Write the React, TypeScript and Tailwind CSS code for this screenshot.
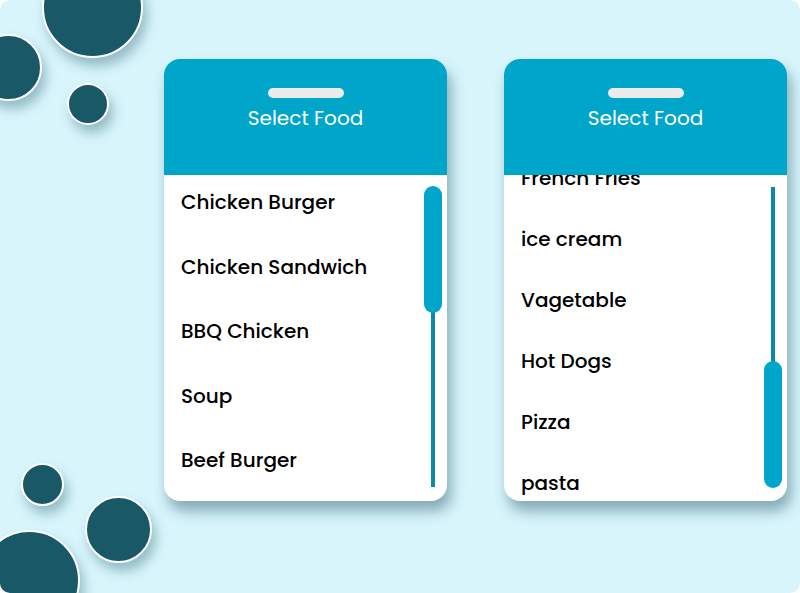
const leftItems = ["Chicken Burger", "Chicken Sandwich", "BBQ Chicken", "Soup", "Beef Burger"];
const rightItems = ["French Fries", "ice cream", "Vagetable", "Hot Dogs", "Pizza", "pasta"];

const font = { fontFamily: "Poppins, 'Open Sans', 'Noto Sans', sans-serif" };

function Bubble({ className }: { className: string }) {
  return (
    <div
      className={`absolute rounded-full border-2 border-white bg-[#195866] shadow-[4px_8px_12px_rgba(20,80,95,0.35)] ${className}`}
    />
  );
}

function FoodCard({
  items,
  offset,
  rowHeight,
  thumbTop,
}: {
  items: string[];
  offset: string;
  rowHeight: string;
  thumbTop: string;
}) {
  return (
    <div className="flex h-[442px] w-[283px] flex-col overflow-hidden rounded-[16px] bg-white shadow-[4px_10px_14px_rgba(30,80,95,0.45)]">
      <div className="relative z-10 flex h-[116px] shrink-0 flex-col items-center bg-[#00a5ca] pt-[29px]">
        <div className="h-[10px] w-[76px] rounded-full bg-[#ececec]" />
        <div className="mt-[6px] text-[20px] leading-[28px] text-white">Select Food</div>
      </div>
      <div className="relative flex-1 overflow-hidden">
        <div className={offset}>
          {items.map((item) => (
            <div key={item} className={`flex items-center pl-[17px] text-[20px] font-medium text-black ${rowHeight}`}>
              {item}
            </div>
          ))}
        </div>
        <div className="absolute right-[12px] top-[12px] h-[300px] w-[4px] bg-[#0a8aa8]" />
        <div className={`absolute right-[5px] h-[127px] w-[18px] rounded-full bg-[#00a5ca] ${thumbTop}`} />
      </div>
    </div>
  );
}

export default function App() {
  return (
    <div className="h-[593px] w-[800px] bg-white" style={font}>
      <div className="relative h-full w-full overflow-hidden rounded-[10px] bg-[#d8f5fc]">
        <Bubble className="left-[42px] top-[-43px] h-[101px] w-[101px]" />
        <Bubble className="left-[-25px] top-[34px] h-[67px] w-[67px]" />
        <Bubble className="left-[67px] top-[83px] h-[42px] w-[42px]" />
        <Bubble className="left-[21px] top-[463px] h-[43px] w-[43px]" />
        <Bubble className="left-[85px] top-[496px] h-[67px] w-[67px]" />
        <Bubble className="left-[-21px] top-[530px] h-[101px] w-[101px]" />

        <div className="flex gap-[57px] pl-[164px] pt-[59px]">
          <FoodCard items={leftItems} offset="-mt-[5px]" rowHeight="h-[64.5px]" thumbTop="top-[11px]" />
          <FoodCard items={rightItems} offset="-mt-[28px]" rowHeight="h-[61px]" thumbTop="top-[186px]" />
        </div>
      </div>
    </div>
  );
}
